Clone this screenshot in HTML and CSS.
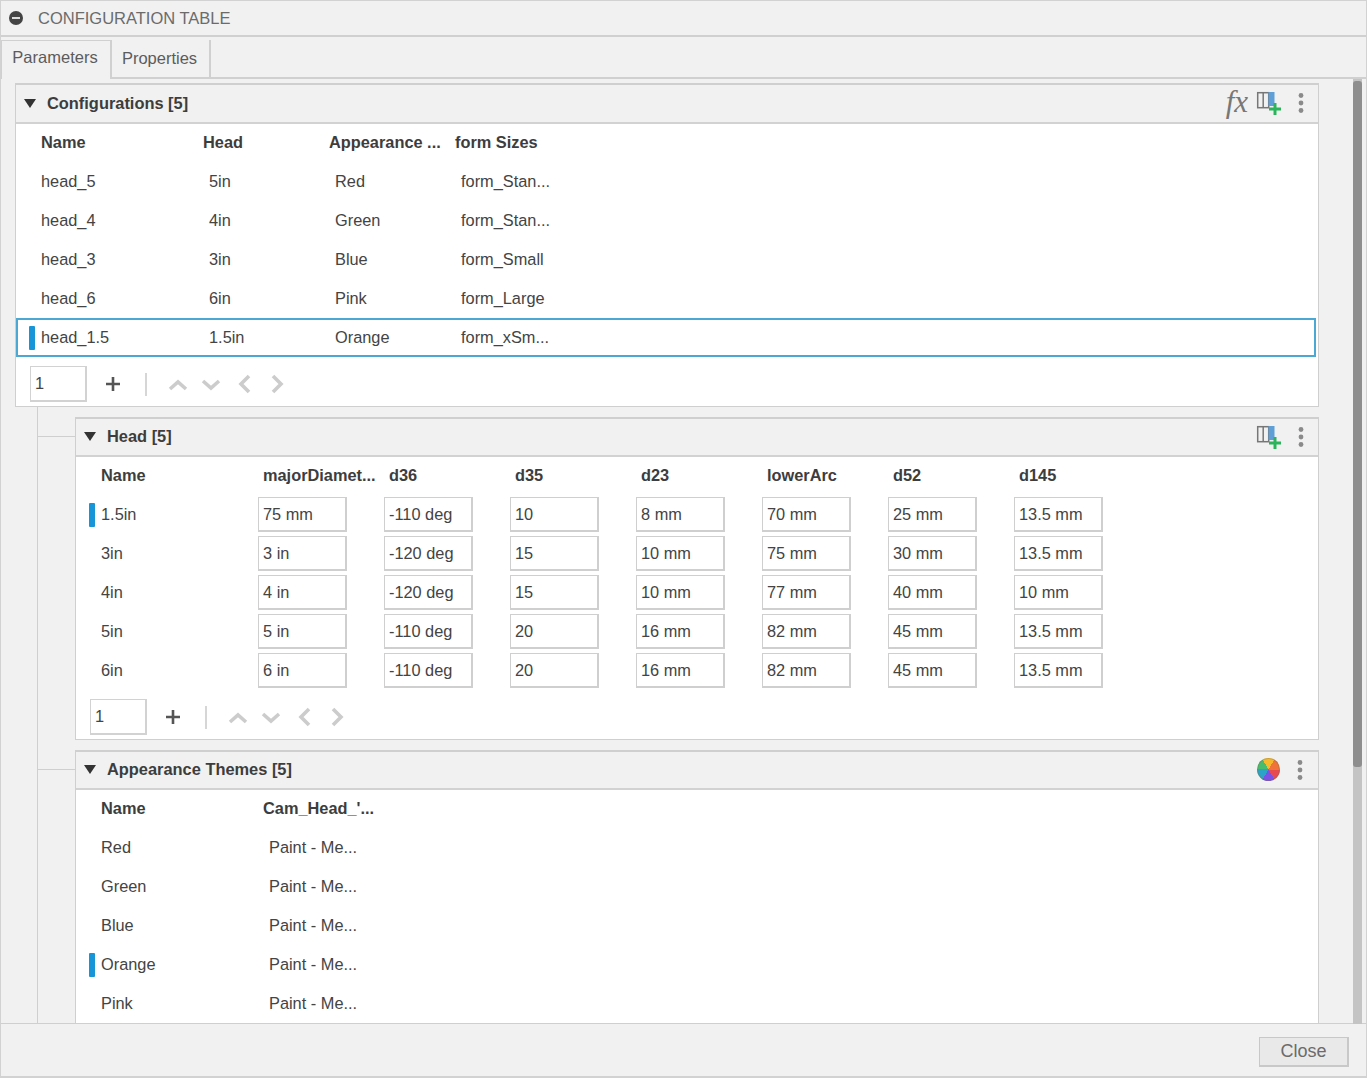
FILE: index.html
```html
<!DOCTYPE html>
<html lang="en">
<head>
<meta charset="utf-8">
<title>Configuration Table</title>
<link rel="stylesheet" href="styles.css">
</head>
<body>
<svg class="defs" width="0" height="0" aria-hidden="true">
  <symbol id="plus" viewBox="0 0 16 16"><path d="M8 1v14M1 8h14" fill="none" stroke="#555" stroke-width="2.6"/></symbol>
  <symbol id="up" viewBox="0 0 20 20"><path d="M2 15l8-7 8 7" fill="none" stroke="#ccc" stroke-width="3.6"/></symbol>
  <symbol id="down" viewBox="0 0 20 20"><path d="M2 7l8 7 8-7" fill="none" stroke="#ccc" stroke-width="3.6"/></symbol>
  <symbol id="left" viewBox="0 0 20 20"><path d="M15 2l-8 8 8 8" fill="none" stroke="#ccc" stroke-width="3.6"/></symbol>
  <symbol id="right" viewBox="0 0 20 20"><path d="M5 2l8 8-8 8" fill="none" stroke="#ccc" stroke-width="3.6"/></symbol>
  <symbol id="dots" viewBox="0 0 6 20"><circle cx="3" cy="2.5" r="2.4" fill="#8a8a8a"/><circle cx="3" cy="10" r="2.4" fill="#8a8a8a"/><circle cx="3" cy="17.5" r="2.4" fill="#8a8a8a"/></symbol>
  <symbol id="coladd" viewBox="0 0 26 26">
    <rect x="1.7" y="2.7" width="11" height="15" fill="#f1f1f1" stroke="#777" stroke-width="1.5"/>
    <path d="M7.2 2.7v15" stroke="#777" stroke-width="1.5"/>
    <rect x="12.5" y="2" width="6" height="14" fill="#5f9fd8"/>
    <path d="M19 13v12M13 19h12" stroke="#2cb45c" stroke-width="3"/>
  </symbol>
</svg>

<div class="window">
  <header class="title-bar">
    <span class="minus-icon"></span>
    <span class="title-text">CONFIGURATION TABLE</span>
  </header>

  <nav class="tabs">
    <div class="tab tab-active">Parameters</div>
    <div class="tab">Properties</div>
  </nav>

  <main class="content">
    <section class="panel panel-root">
      <div class="panel-head">
        <span class="tri"></span>
        <span class="panel-title">Configurations [5]</span>
        <span class="fx">fx</span>
        <svg class="ico-coladd"><use href="#coladd"/></svg>
        <svg class="ico-dots"><use href="#dots"/></svg>
      </div>
      <div class="row cols-4 row-head"><div>Name</div><div>Head</div><div>Appearance ...</div><div>form Sizes</div></div>
      <div class="row cols-4"><div>head_5</div><div class="val">5in</div><div class="val">Red</div><div class="val">form_Stan...</div></div>
      <div class="row cols-4"><div>head_4</div><div class="val">4in</div><div class="val">Green</div><div class="val">form_Stan...</div></div>
      <div class="row cols-4"><div>head_3</div><div class="val">3in</div><div class="val">Blue</div><div class="val">form_Small</div></div>
      <div class="row cols-4"><div>head_6</div><div class="val">6in</div><div class="val">Pink</div><div class="val">form_Large</div></div>
      <div class="row cols-4 row-selected"><span class="marker"></span><div>head_1.5</div><div class="val">1.5in</div><div class="val">Orange</div><div class="val">form_xSm...</div></div>
      <div class="panel-foot">
        <div class="count">1</div>
        <svg class="ico-plus"><use href="#plus"/></svg>
        <span class="sep"></span>
        <svg class="ico-nav"><use href="#up"/></svg>
        <svg class="ico-nav"><use href="#down"/></svg>
        <svg class="ico-nav"><use href="#left"/></svg>
        <svg class="ico-nav"><use href="#right"/></svg>
      </div>
    </section>

    <div class="tree">
      <section class="panel panel-child">
        <div class="panel-head">
          <span class="tri"></span>
          <span class="panel-title">Head [5]</span>
          <svg class="ico-coladd ico-push"><use href="#coladd"/></svg>
          <svg class="ico-dots"><use href="#dots"/></svg>
        </div>
        <div class="row cols-8 row-head"><div>Name</div><div>majorDiamet...</div><div>d36</div><div>d35</div><div>d23</div><div>lowerArc</div><div>d52</div><div>d145</div></div>
        <div class="row cols-8"><span class="marker"></span><div>1.5in</div><div class="cell">75 mm</div><div class="cell">-110 deg</div><div class="cell">10</div><div class="cell">8 mm</div><div class="cell">70 mm</div><div class="cell">25 mm</div><div class="cell">13.5 mm</div></div>
        <div class="row cols-8"><div>3in</div><div class="cell">3 in</div><div class="cell">-120 deg</div><div class="cell">15</div><div class="cell">10 mm</div><div class="cell">75 mm</div><div class="cell">30 mm</div><div class="cell">13.5 mm</div></div>
        <div class="row cols-8"><div>4in</div><div class="cell">4 in</div><div class="cell">-120 deg</div><div class="cell">15</div><div class="cell">10 mm</div><div class="cell">77 mm</div><div class="cell">40 mm</div><div class="cell">10 mm</div></div>
        <div class="row cols-8"><div>5in</div><div class="cell">5 in</div><div class="cell">-110 deg</div><div class="cell">20</div><div class="cell">16 mm</div><div class="cell">82 mm</div><div class="cell">45 mm</div><div class="cell">13.5 mm</div></div>
        <div class="row cols-8"><div>6in</div><div class="cell">6 in</div><div class="cell">-110 deg</div><div class="cell">20</div><div class="cell">16 mm</div><div class="cell">82 mm</div><div class="cell">45 mm</div><div class="cell">13.5 mm</div></div>
        <div class="panel-foot">
          <div class="count">1</div>
          <svg class="ico-plus"><use href="#plus"/></svg>
          <span class="sep"></span>
          <svg class="ico-nav"><use href="#up"/></svg>
          <svg class="ico-nav"><use href="#down"/></svg>
          <svg class="ico-nav"><use href="#left"/></svg>
          <svg class="ico-nav"><use href="#right"/></svg>
        </div>
      </section>

      <section class="panel panel-child">
        <div class="panel-head">
          <span class="tri"></span>
          <span class="panel-title">Appearance Themes [5]</span>
          <span class="wheel"></span>
          <svg class="ico-dots ico-dots-wheel"><use href="#dots"/></svg>
        </div>
        <div class="row cols-2 row-head"><div>Name</div><div>Cam_Head_'...</div></div>
        <div class="row cols-2"><div>Red</div><div class="val">Paint - Me...</div></div>
        <div class="row cols-2"><div>Green</div><div class="val">Paint - Me...</div></div>
        <div class="row cols-2"><div>Blue</div><div class="val">Paint - Me...</div></div>
        <div class="row cols-2"><span class="marker"></span><div>Orange</div><div class="val">Paint - Me...</div></div>
        <div class="row cols-2"><div>Pink</div><div class="val">Paint - Me...</div></div>
      </section>
    </div>

    <div class="scrollbar"><div class="scroll-thumb"></div></div>
  </main>

  <footer class="foot">
    <div class="close-btn">Close</div>
  </footer>
</div>
</body>
</html>
```

FILE: styles.css
```css
* { box-sizing: border-box; }

html, body {
  margin: 0;
  height: 100%;
  background: #fff;
}

body {
  font-family: "Liberation Sans", Arial, sans-serif;
  font-size: 16.35px;
  color: #444;
}

.defs { position: absolute; }

.window {
  width: 1367px;
  height: 1078px;
  display: flex;
  flex-direction: column;
  background: #f1f1f1;
  border: 1px solid #d2d2d2;
  border-bottom-width: 2px;
  overflow: hidden;
}

.title-bar {
  height: 36px;
  flex: none;
  display: flex;
  align-items: center;
  padding-left: 8px;
  border-bottom: 2px solid #d0d0d0;
}

.minus-icon {
  width: 14px;
  height: 14px;
  border-radius: 50%;
  background: #444;
  display: flex;
  align-items: center;
  justify-content: center;
}

.minus-icon::before {
  content: "";
  width: 8px;
  height: 2px;
  background: #ddd;
}

.title-text {
  margin-left: 15px;
  margin-top: 1px;
  font-size: 16.5px;
  color: #6b6b6b;
}

.tabs {
  height: 42px;
  flex: none;
  display: flex;
  border-bottom: 2px solid #d0d0d0;
  padding-top: 3px;
}

.tab {
  height: 37px;
  width: 99px;
  display: flex;
  align-items: center;
  justify-content: center;
  font-size: 16.5px;
  color: #5c5c5c;
  border-right: 2px solid #d0d0d0;
  padding: 0 2px 1px 0;
}

.tab-active {
  width: 111px;
  height: 39px;
  padding-bottom: 5px;
  border-top: 1px solid #d0d0d0;
  border-left: 1px solid #d0d0d0;
  background: #f1f1f1;
}

.content {
  flex: 1;
  min-height: 0;
  position: relative;
  overflow: hidden;
  padding: 4px 47px 0 14px;
  background: linear-gradient(#cfcfcf, #cfcfcf) left bottom / 100% 1px no-repeat #f1f1f1;
}

.panel {
  position: relative;
  background: #fff;
  border: 1px solid #cfcfcf;
  border-top-width: 2px;
}

.panel-head {
  height: 38px;
  padding: 0 0 1px 8px;
  display: flex;
  align-items: center;
  background: #f1f1f1;
  border-bottom: 2px solid #d2d2d2;
}

.panel-root .panel-head { height: 39px; }

.tri {
  width: 0;
  height: 0;
  border-left: 6.5px solid transparent;
  border-right: 6.5px solid transparent;
  border-top: 9px solid #333;
}

.panel-title {
  margin-left: 11px;
  font-size: 16.4px;
  font-weight: bold;
  color: #3d3d3d;
}

.fx {
  margin-left: auto;
  font-family: "Liberation Serif", serif;
  font-style: italic;
  font-size: 31px;
  line-height: 30px;
  color: #777;
  margin-top: -2px;
}

.ico-coladd {
  width: 26px;
  height: 26px;
  margin-left: 8px;
  margin-right: 16px;
}

.ico-push { margin-left: auto; }

.ico-dots {
  width: 6px;
  height: 20px;
  margin-right: 14px;
}

.ico-dots-wheel { margin-right: 15px; }

.wheel {
  margin-left: auto;
  margin-right: 17px;
  width: 23px;
  height: 23px;
  border-radius: 50%;
  background: conic-gradient(from -30deg, #f6b92e 0 60deg, #f0733a 60deg 120deg, #e84a52 120deg 180deg, #7a50e6 180deg 240deg, #2ba3c8 240deg 300deg, #46bd6e 300deg 360deg);
  box-shadow: inset 0 0 0 1px rgba(120, 110, 60, .35);
}

.row {
  height: 39px;
  display: grid;
  align-items: center;
  position: relative;
  padding-left: 25px;
  margin-right: 2px;
  white-space: nowrap;
}

.cols-4 { grid-template-columns: 162px repeat(3, 126px); }
.cols-8 { grid-template-columns: 162px repeat(7, 126px); }
.cols-2 { grid-template-columns: 162px 126px; }

.row-head {
  height: 38px;
  padding-bottom: 1px;
  font-weight: bold;
  color: #3d3d3d;
}

.val { padding-left: 6px; }

.row-selected {
  box-shadow: inset 0 0 0 2px #4aa8d3;
}

.marker {
  position: absolute;
  left: 13px;
  top: 8px;
  width: 6px;
  height: 24px;
  border-radius: 1px;
  background: #1795d8;
}

.cell {
  width: 89px;
  height: 35px;
  margin-left: -5px;
  padding-left: 4px;
  display: flex;
  align-items: center;
  background: #fff;
  border: 1px solid #cfcfcf;
  border-width: 1px 2px 2px 1px;
}

.panel-foot {
  height: 49px;
  display: flex;
  align-items: flex-start;
  padding: 9px 0 0 14px;
}

.count {
  width: 57px;
  height: 36px;
  padding-left: 4px;
  display: flex;
  align-items: center;
  border: 2px solid #d2d2d2;
  border-width: 1px 2px 2px 1px;
}

.ico-plus {
  width: 16px;
  height: 16px;
  margin: 10px 0 0 18px;
}

.sep {
  width: 2px;
  height: 23px;
  margin: 7px 0 0 24px;
  background: #d6d6d6;
}

.ico-nav {
  width: 20px;
  height: 20px;
  margin: 8px 0 0 13px;
}

.sep + .ico-nav { margin-left: 21px; }
.ico-nav:last-child { margin-left: 14px; }

.tree {
  margin-left: 22px;
  border-left: 1px solid #cfcfcf;
  padding: 10px 0 0 37px;
  min-height: 1000px;
}

.panel-child { margin-bottom: 10px; }

.panel-child::before {
  content: "";
  position: absolute;
  left: -38px;
  top: 17px;
  width: 37px;
  height: 1px;
  background: #cfcfcf;
}

.scrollbar {
  position: absolute;
  left: 1352px;
  top: 0;
  bottom: 0;
  width: 9px;
  background: #c4c4c4;
  padding-top: 2px;
}

.scroll-thumb {
  height: 686px;
  background: #8e8e8e;
  border-radius: 3px;
}

.foot {
  height: 52px;
  flex: none;
  display: flex;
  align-items: flex-start;
  justify-content: flex-end;
  padding: 13px 17px 0 0;
}

.close-btn {
  width: 90px;
  height: 30px;
  display: flex;
  align-items: center;
  justify-content: center;
  font-size: 18px;
  color: #6b6b6b;
  background: #e9e9e9;
  border: 1px solid #c8c8c8;
  border-width: 1px 2px 2px 1px;
}
```
